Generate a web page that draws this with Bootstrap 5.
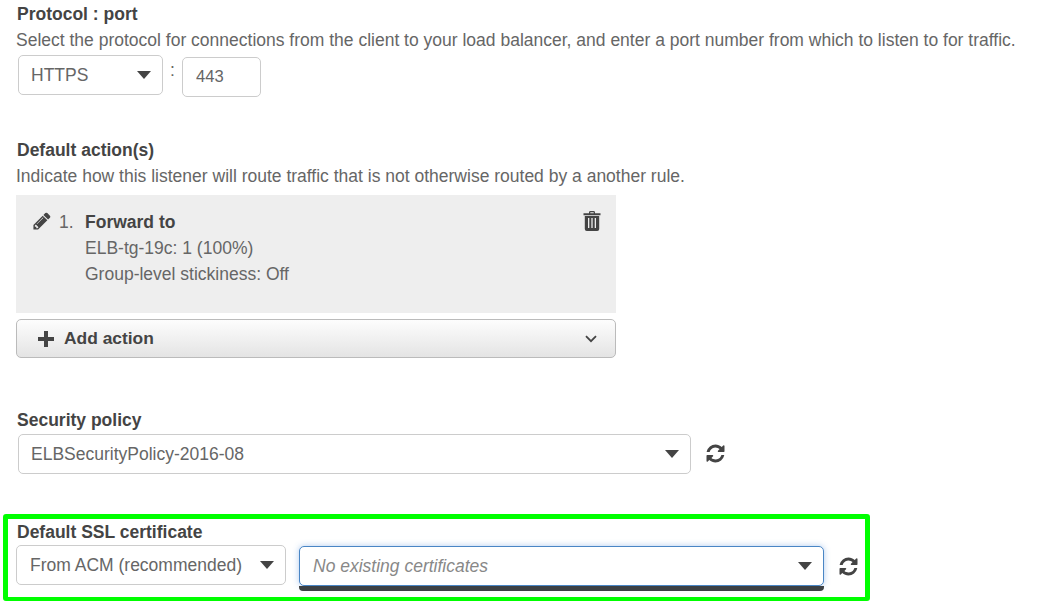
<!DOCTYPE html>
<html lang="en">
<head>
    <meta charset="UTF-8">
    <title>Listener settings</title>
    <link rel="stylesheet" href="https://cdn.jsdelivr.net/npm/bootstrap@5.3.0/dist/css/bootstrap.min.css">
    <style>
        html, body { height: 601px; overflow: hidden; }
        body { background: #fff; color: #666; font-family: "Liberation Sans", Arial, sans-serif; font-size: 17.5px; line-height: 26px; }
        .page-wrap { padding: 1px 0 0 16px; }
        .field-title { color: #444; font-weight: 700; font-size: 17.5px; }
        .page-wrap > .field-title, .cert-frame > .field-title { padding-left: 1px; }
        .sel-box.form-select {
            height: 40px; padding: 0 30px 0 12px; color: #666; font-size: 17.5px; border: 1px solid #ccc; border-radius: 5px; box-shadow: none;
            background-image: url("data:image/svg+xml,%3Csvg xmlns='http://www.w3.org/2000/svg' viewBox='0 0 14 8'%3E%3Cpath fill='%23444' d='M0 0h14L7 8z'/%3E%3C/svg%3E");
            background-size: 14px 8px; background-position: right 11px center;
        }
        .sel-https { width: 145px; margin: 2px 0 0 2px; }
        .port-sep { width: 19px; text-align: center; line-height: 32px; margin-top: 1px; }
        .port-input.form-control { width: 79px; height: 40px; margin-top: 4px; padding: 0 13px; color: #666; font-size: 16.6px; border-color: #ccc; border-radius: 5px; }
        .action-panel { width: 600px; height: 118px; margin-top: 6px; padding: 14px 15px 0 16px; background: #eee; }
        .action-num { width: 26px; margin-left: 7px; }
        .add-btn.btn { width: 600px; height: 39px; margin-top: 6px; padding: 0 18px 0 21px; color: #444; font-size: 17.4px; font-weight: 700; border: 1px solid #bbb; border-radius: 5px; background: linear-gradient(#fdfdfd, #e4e4e4); }
        .sel-policy { width: 673px; margin: 1px 0 0 2px; }
        .refresh-ico { width: 21px; height: 21px; fill: #444; flex: none; }
        .cert-frame { width: 867px; height: 87px; margin: 40px 0 0 3px; padding: 0 0 0 8px; border: 5px solid #0f0; border-bottom-width: 4px; border-radius: 3px; }
        .cert-frame .field-title { padding-top: 1px; line-height: 25px; }
        .sel-source.form-select { width: 270px; padding-left: 13px; }
        .sel-cert-wrap { width: 525px; margin: 1px 13.5px 0 13px; }
        .sel-cert.form-select { display: block; width: 100%; padding-left: 13px; color: #888; font-style: italic; border-color: #4a86c5; box-shadow: 0 0 6px rgba(80, 140, 220, .45); }
        .cert-bar { position: relative; height: 5px; background: #3c4044; border-radius: 0 0 4px 4px; }
    </style>
</head>
<body>
<div class="page-wrap">
    <div class="field-title">Protocol : port</div>
    <div>Select the protocol for connections from the client to your load balancer, and enter a port number from which to listen to for traffic.</div>
    <div class="d-flex align-items-start">
        <select class="form-select sel-box sel-https"><option>HTTPS</option></select>
        <span class="port-sep">:</span>
        <input class="form-control port-input" value="443">
    </div>

    <div class="field-title" style="margin-top:40px">Default action(s)</div>
    <div>Indicate how this listener will route traffic that is not otherwise routed by a another rule.</div>
    <div class="action-panel d-flex align-items-start">
        <svg width="20" height="20" viewBox="0 0 1792 1792" fill="#444" style="margin-top:2px"><path d="M491 1536l91-91-235-235-91 91v107h128v128h107zm523-928q0-22-22-22-10 0-17 7l-542 542q-7 7-7 17 0 22 22 22 10 0 17-7l542-542q7-7 7-17zm-54-192l416 416-832 832h-416v-416zm683 96q0 53-37 90l-166 166-416-416 166-165q36-38 90-38 53 0 91 38l235 234q37 39 37 91z"/></svg>
        <span class="action-num">1.</span>
        <div class="flex-grow-1">
            <div class="field-title">Forward to</div>
            <div>ELB-tg-19c: 1 (100%)</div>
            <div>Group-level stickiness: Off</div>
        </div>
        <svg width="18" height="20" viewBox="0 0 18 20" fill="#444" style="margin-top:2px"><path d="M6 2.2V1.4Q6 0 7.5 0h3Q12 0 12 1.4v.8h5.500v2H.5v-2zM7.300 2.200h3.400V1.300H7.300z"/><path fill-rule="evenodd" d="M1.800 5h14.400v13q0 2-2 2H3.800q-2 0-2-2zM5 7v10h1.300V7zm3.350 0v10h1.300V7zM11.700 7v10H13V7z"/></svg>
    </div>
    <button type="button" class="btn add-btn d-flex align-items-center">
        <svg width="16" height="16" viewBox="0 0 16 16" fill="#444" style="margin-right:10px"><path d="M6 0h4v6h6v4h-6v6H6v-6H0V6h6z"/></svg>
        <span class="flex-grow-1 text-start">Add action</span>
        <svg width="12" height="8" viewBox="0 0 12 8" fill="none" stroke="#444" stroke-width="1.800"><path d="M1 1.200l5 5 5-5"/></svg>
    </button>

    <div class="field-title" style="margin-top:49px">Security policy</div>
    <div class="d-flex align-items-center" style="gap:13.5px">
        <select class="form-select sel-box sel-policy"><option>ELBSecurityPolicy-2016-08</option></select>
        <svg class="refresh-ico" viewBox="0 0 1792 1792"><path d="M1639 1056q0 5-1 7-64 268-268 434.500t-478 166.500q-146 0-282.500-55t-243.500-157l-129 129q-19 19-45 19t-45-19-19-45v-448q0-26 19-45t45-19h448q26 0 45 19t19 45-19 45l-137 137q71 66 161 102t187 36q134 0 250-65t186-179q11-17 53-117 8-23 30-23h192q13 0 22.500 9.500t9.500 22.500zm25-800v448q0 26-19 45t-45 19h-448q-26 0-45-19t-19-45 19-45l138-138q-148-137-349-137-134 0-250 65t-186 179q-11 17-53 117-8 23-30 23h-199q-13 0-22.500-9.500t-9.500-22.500v-7q65-268 270-434.500t480-166.500q146 0 284 55.500t245 156.500l130-129q19-19 45-19t45 19 19 45z"/></svg>
    </div>
</div>

<div class="cert-frame">
    <div class="field-title">Default SSL certificate</div>
    <div class="d-flex align-items-start">
        <select class="form-select sel-box sel-source"><option>From ACM (recommended)</option></select>
        <div class="sel-cert-wrap">
            <select class="form-select sel-box sel-cert"><option>No existing certificates</option></select>
            <div class="cert-bar"></div>
        </div>
        <svg class="refresh-ico" style="margin-top:10.5px" viewBox="0 0 1792 1792"><path d="M1639 1056q0 5-1 7-64 268-268 434.500t-478 166.500q-146 0-282.500-55t-243.500-157l-129 129q-19 19-45 19t-45-19-19-45v-448q0-26 19-45t45-19h448q26 0 45 19t19 45-19 45l-137 137q71 66 161 102t187 36q134 0 250-65t186-179q11-17 53-117 8-23 30-23h192q13 0 22.500 9.500t9.500 22.500zm25-800v448q0 26-19 45t-45 19h-448q-26 0-45-19t-19-45 19-45l138-138q-148-137-349-137-134 0-250 65t-186 179q-11 17-53 117-8 23-30 23h-199q-13 0-22.500-9.500t-9.500-22.500v-7q65-268 270-434.500t480-166.500q146 0 284 55.500t245 156.500l130-129q19-19 45-19t45 19 19 45z"/></svg>
    </div>
</div>
<script src="https://cdn.jsdelivr.net/npm/bootstrap@5.3.0/dist/js/bootstrap.bundle.min.js"></script>
</body>
</html>
